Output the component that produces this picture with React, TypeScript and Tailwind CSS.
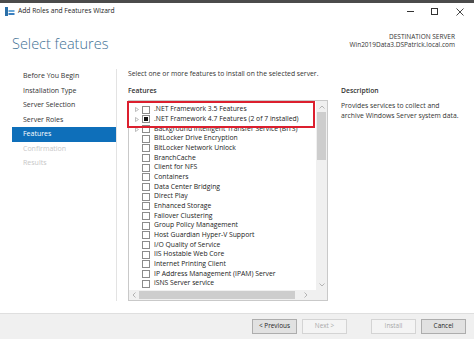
import React from "react";

const items: { label: string; arrow?: boolean; state?: "partial" }[] = [
  { label: ".NET Framework 3.5 Features", arrow: true },
  { label: ".NET Framework 4.7 Features (2 of 7 installed)", arrow: true, state: "partial" },
  { label: "Background Intelligent Transfer Service (BITS)", arrow: true },
  { label: "BitLocker Drive Encryption" },
  { label: "BitLocker Network Unlock" },
  { label: "BranchCache" },
  { label: "Client for NFS" },
  { label: "Containers" },
  { label: "Data Center Bridging" },
  { label: "Direct Play" },
  { label: "Enhanced Storage" },
  { label: "Failover Clustering" },
  { label: "Group Policy Management" },
  { label: "Host Guardian Hyper-V Support" },
  { label: "I/O Quality of Service" },
  { label: "IIS Hostable Web Core" },
  { label: "Internet Printing Client" },
  { label: "IP Address Management (IPAM) Server" },
  { label: "iSNS Server service" },
];

const nav = [
  { label: "Before You Begin" },
  { label: "Installation Type" },
  { label: "Server Selection" },
  { label: "Server Roles" },
  { label: "Features", active: true },
  { label: "Confirmation", disabled: true },
  { label: "Results", disabled: true },
];

function Btn({ children, disabled }: { children: React.ReactNode; disabled?: boolean }) {
  return (
    <div
      className={
        "w-[45px] h-[15px] flex items-center justify-center border text-[6.4px] " +
        (disabled
          ? "border-[#d4d4d4] bg-[#f4f4f4] text-[#a8a8a8]"
          : "border-[#adadad] bg-[#e1e1e1] text-[#1e1e1e]")
      }
    >
      {children}
    </div>
  );
}

export default function App() {
  return (
    <div className="w-[474px] h-[339px] bg-white overflow-hidden flex flex-col text-[#1e1e1e] font-['Open_Sans','Noto_Sans',sans-serif]">
      <div className="h-[3px] bg-[#4b4b4b]" />
      {/* Title bar */}
      <div className="h-[17px] flex items-center pl-[5px]">
        <svg width="10" height="9" viewBox="0 0 10 9">
          <rect x="0" y="0" width="3" height="9" fill="#2a6fa8" />
          <rect x="3.5" y="3" width="6" height="2" fill="#6aa8d8" />
          <rect x="3.5" y="6" width="6" height="2" fill="#3a7fbf" />
        </svg>
        <span className="ml-[3px] text-[6.7px] leading-none">Add Roles and Features Wizard</span>
        <div className="ml-auto flex items-center h-full">
          <div className="w-[24px] flex justify-center">
            <div className="w-[7px] h-[1px] bg-[#333]" />
          </div>
          <div className="w-[24px] flex justify-center">
            <div className="w-[7px] h-[7px] border border-[#333]" />
          </div>
          <div className="w-[28px] flex justify-center pr-[1px]">
            <svg width="8" height="8" viewBox="0 0 8 8">
              <path d="M0.5 0.5 L7.5 7.5 M7.5 0.5 L0.5 7.5" stroke="#333" strokeWidth="0.9" />
            </svg>
          </div>
        </div>
      </div>
      {/* Header */}
      <div className="h-[45px] flex justify-between">
        <div className="pl-[12px] pt-[14px] text-[14.5px] leading-[20px] text-[#3f7195] font-light">Select features</div>
        <div className="pr-[19px] pt-[13px] text-right text-[6.5px] leading-[8px] text-[#333]">
          <div>DESTINATION SERVER</div>
          <div>Win2019Data3.DSPatrick.local.com</div>
        </div>
      </div>
      {/* Main */}
      <div className="flex-1 flex min-h-0">
        <div className="w-[117px] pl-[12px] pt-[4px] pb-[12px] flex">
          <div className="flex-1 flex flex-col">
            {nav.map((n) => (
              <div
                key={n.label}
                className={
                  "h-[14.5px] flex items-center pl-[11px] text-[7px] " +
                  (n.active ? "bg-[#0e6fba] text-white" : n.disabled ? "text-[#c6c6c6]" : "text-[#333]")
                }
              >
                {n.label}
              </div>
            ))}
          </div>
          <div className="w-[1px] bg-[#e3e3e3]" />
        </div>
        <div className="flex-1 pl-[11px] flex flex-col">
          <div className="pt-[4px] h-[21px] text-[6.8px] leading-[9px] text-[#333]">
            Select one or more features to install on the selected server.
          </div>
          <div className="flex flex-1 min-h-0">
            <div className="w-[200px] flex flex-col">
              <div className="h-[14px] text-[6.8px] leading-[9px] font-semibold text-[#333]">Features</div>
              <div className="relative h-[201px] border border-[#c9c9c9] flex flex-col">
                <div className="flex flex-1 min-h-0">
                  <div className="flex-1 overflow-hidden pt-[4px]">
                    {items.map((it) => (
                      <div key={it.label} className="h-[9.67px] flex items-center whitespace-nowrap">
                        <div className="w-[13px] flex justify-end pr-[3px]">
                          {it.arrow && (
                            <svg width="4" height="5" viewBox="0 0 4 5">
                              <path d="M0.5 0.5 L3.5 2.5 L0.5 4.5 Z" fill="none" stroke="#a0a0a0" strokeWidth="0.7" />
                            </svg>
                          )}
                        </div>
                        <div className="w-[8px] h-[8px] border border-[#8c8c8c] bg-white flex items-center justify-center">
                          {it.state === "partial" && <div className="w-[4px] h-[4px] bg-[#111]" />}
                        </div>
                        <span className="ml-[4px] text-[6.8px] leading-none text-[#222]">{it.label}</span>
                      </div>
                    ))}
                  </div>
                  {/* vertical scrollbar */}
                  <div className="w-[11px] bg-[#f0f0f0] flex flex-col items-center">
                    <div className="h-[11px] flex items-center justify-center">
                      <svg width="6" height="4" viewBox="0 0 6 4">
                        <path d="M0.5 3.5 L3 1 L5.5 3.5" fill="none" stroke="#a5a5a5" strokeWidth="0.8" />
                      </svg>
                    </div>
                    <div className="w-[9px] h-[48px] bg-[#cdcdcd]" />
                    <div className="flex-1" />
                    <div className="h-[11px] flex items-center justify-center">
                      <svg width="6" height="4" viewBox="0 0 6 4">
                        <path d="M0.5 0.5 L3 3 L5.5 0.5" fill="none" stroke="#a5a5a5" strokeWidth="0.8" />
                      </svg>
                    </div>
                  </div>
                </div>
                {/* horizontal scrollbar */}
                <div className="h-[10px] flex">
                  <div className="flex-1 bg-[#f0f0f0] flex items-center">
                    <div className="w-[10px] flex justify-center">
                      <svg width="4" height="6" viewBox="0 0 4 6">
                        <path d="M3.5 0.5 L1 3 L3.5 5.5" fill="none" stroke="#a5a5a5" strokeWidth="0.8" />
                      </svg>
                    </div>
                    <div className="w-[156px] h-[8px] bg-[#cdcdcd]" />
                    <div className="flex-1 flex justify-center">
                      <svg width="4" height="6" viewBox="0 0 4 6">
                        <path d="M0.5 0.5 L3 3 L0.5 5.5" fill="none" stroke="#a5a5a5" strokeWidth="0.8" />
                      </svg>
                    </div>
                  </div>
                  <div className="w-[11px] bg-[#f0f0f0]" />
                </div>
                {/* red annotation */}
                <div className="absolute left-[-2px] top-[0px] w-[188px] h-[27px] border-2 border-[#dc1f2e]" />
              </div>
            </div>
            <div className="pl-[13px] flex flex-col">
              <div className="h-[13px] text-[6.8px] leading-[9px] font-semibold text-[#333]">Description</div>
              <div className="pt-[2px] text-[6.8px] leading-[10px] text-[#333]">
                <div>Provides services to collect and</div>
                <div>archive Windows Server system data.</div>
              </div>
            </div>
          </div>
        </div>
      </div>
      {/* Footer */}
      <div className="h-[26px] bg-[#f0f0f0] border-t border-[#dfdfdf] flex items-center pl-[252px] gap-[5px] pb-[1px]">
        <Btn>&lt; Previous</Btn>
        <Btn disabled>Next &gt;</Btn>
        <div className="w-[14px]" />
        <Btn disabled>Install</Btn>
        <Btn>Cancel</Btn>
      </div>
    </div>
  );
}
